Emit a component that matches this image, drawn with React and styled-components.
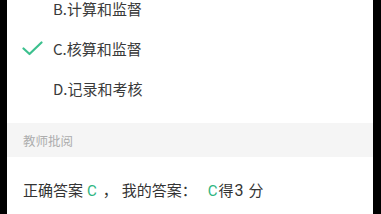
import React from "react";
import styled, { createGlobalStyle } from "styled-components";

const Global = createGlobalStyle`
  html, body {
    margin: 0;
    padding: 0;
    background: #000;
    overflow: hidden;
  }
  body {
    font-family: "Noto Sans CJK SC", "Noto Sans", sans-serif;
  }
`;

const Page = styled.div`
  width: 366px;
  height: 214px;
  margin-left: 7px;
  background: #fff;
  overflow: hidden;
`;

const Options = styled.div`
  margin-top: -12px;
  display: flex;
  flex-direction: column;
`;

const Option = styled.div`
  height: 40px;
  display: flex;
  align-items: center;
  padding-left: 15px;
`;

const Mark = styled.div`
  width: 31px;
  display: flex;
  align-items: center;
`;

const OptionText = styled.span`
  font-size: 15px;
  color: #3a3a3a;
`;

const Section = styled.div`
  margin-top: 15px;
  height: 34px;
  background: #f5f5f5;
  display: flex;
  align-items: center;
  padding-left: 16px;
  font-size: 12.5px;
  color: #adadad;
`;

const Result = styled.div`
  height: 60px;
  display: flex;
  align-items: baseline;
  padding-top: 22px;
  box-sizing: border-box;
  padding-left: 16px;
  font-size: 15px;
  color: #333;
  white-space: pre;
`;

const Piece = styled.span`
  margin-left: ${(p) => p.$ml || 0}px;
`;

const Green = styled.span`
  color: #2eb57f;
  font-family: Roboto, "Liberation Sans", sans-serif;
  margin-left: ${(p) => p.$ml || 0}px;
`;

const Num = styled.span`
  font-family: Roboto, "Liberation Sans", sans-serif;
  font-size: 16px;
  margin-left: ${(p) => p.$ml || 0}px;
`;

function Check() {
  return (
    <svg width="21" height="15" viewBox="0 0 21 15">
      <path
        d="M1.5 7.5 L7.5 13 L19.5 1.5"
        fill="none"
        stroke="#3cc08e"
        strokeWidth="2.2"
        strokeLinecap="round"
        strokeLinejoin="round"
      />
    </svg>
  );
}

export default function App() {
  const opts = [
    { text: "B.计算和监督" },
    { text: "C.核算和监督", picked: true },
    { text: "D.记录和考核" },
  ];
  return (
    <>
      <Global />
      <Page>
        <Options>
          {opts.map((o) => (
            <Option key={o.text}>
              <Mark>{o.picked && <Check />}</Mark>
              <OptionText>{o.text}</OptionText>
            </Option>
          ))}
        </Options>
        <Section>教师批阅</Section>
        <Result>
          <Piece>正确答案</Piece>
          <Green $ml={4}>C</Green>
          <Piece $ml={6}>，</Piece>
          <Piece $ml={4}>我的答案：</Piece>
          <Green $ml={11}>C</Green>
          <Piece $ml={1}>得</Piece>
          <Num $ml={1}>3</Num>
          <Piece $ml={5}>分</Piece>
        </Result>
      </Page>
    </>
  );
}
